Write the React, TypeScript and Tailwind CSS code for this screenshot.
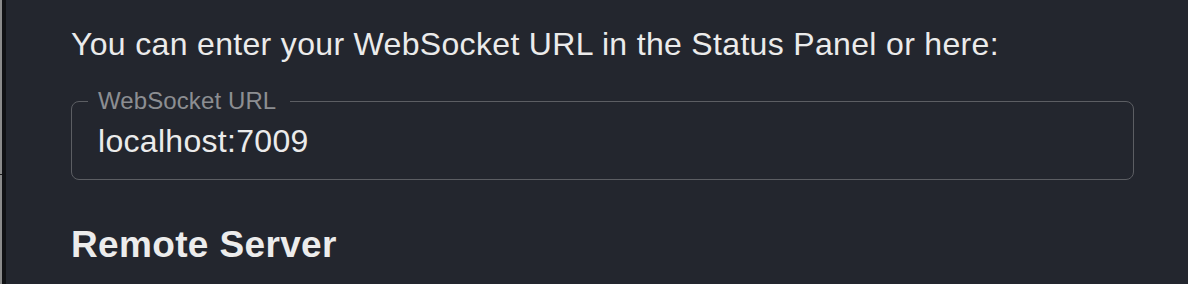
import React from "react";

export default function App() {
  return (
    <div
      className="flex h-[284px] w-[1188px] overflow-hidden bg-[#23262e]"
      style={{ fontFamily: '"Liberation Sans", Arial, sans-serif' }}
    >
      <div className="relative h-full w-[2px] shrink-0 bg-[#8b8b8b]">
        <div className="absolute left-0 top-[174px] h-[1px] w-[2px] bg-[#1a1a1a]" />
      </div>
      <div className="h-full w-[4px] shrink-0 bg-[#101114]" />
      <div className="flex min-w-0 flex-1 flex-col pl-[65px] pr-[54px] pt-[20px]">
        <p className="text-[32px] leading-[48px] tracking-[0.33px] text-[#ebebeb]">
          You can enter your WebSocket URL in the Status Panel or here:
        </p>
        <fieldset className="mt-[21px] h-[91px] rounded-[8px] border border-[#5c5e63] pb-0 pl-[26px] pr-[16px] pt-0">
          <legend className="-ml-[10px] pl-[10px] pr-[14px] text-[24px] leading-[24px] tracking-[0.1px] text-[#8c8e92]">
            WebSocket URL
          </legend>
          <div className="mt-[4px] text-[32px] leading-[48px] tracking-[0.3px] text-[#ebebeb]">
            localhost:7009
          </div>
        </fieldset>
        <h2 className="mt-[43px] text-[37px] font-bold leading-[44px] tracking-[0.35px] text-[#ececec]">
          Remote Server
        </h2>
      </div>
    </div>
  );
}
